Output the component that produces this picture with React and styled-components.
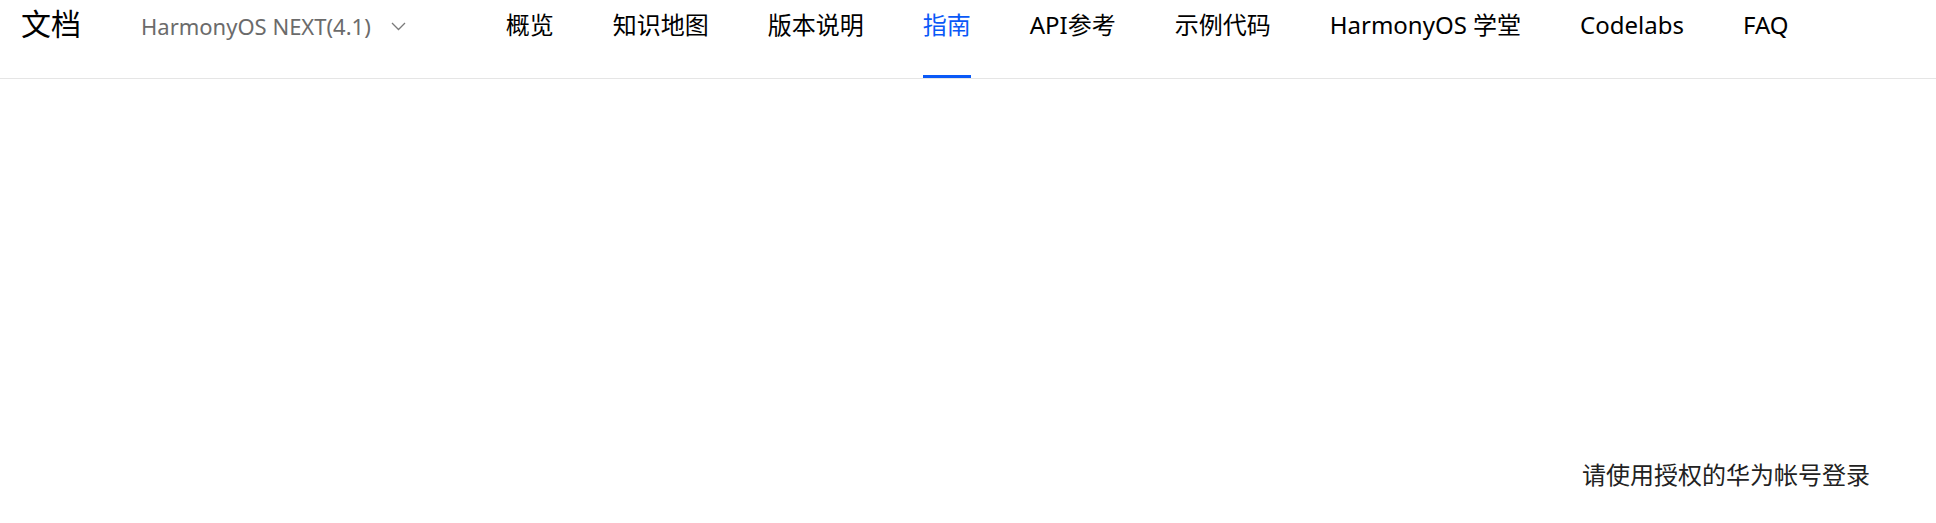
import React from "react";
import styled, { createGlobalStyle } from "styled-components";

const GlobalStyle = createGlobalStyle`
  html, body {
    margin: 0;
    padding: 0;
    background: #ffffff;
  }
  body {
    font-family: "Noto Sans", "Noto Sans CJK SC", sans-serif;
    color: #000000;
  }
`;

const navItems = [
  "概览",
  "知识地图",
  "版本说明",
  "指南",
  "API参考",
  "示例代码",
  "HarmonyOS 学堂",
  "Codelabs",
  "FAQ",
];

const St = {
  Page: styled.div`
    width: 100%;
    min-height: 523px;
    display: flex;
    flex-direction: column;
  `,

  Header: styled.header`
    display: flex;
    align-items: flex-start;
    height: 78px;
    border-bottom: 1px solid #e5e5e5;
    padding-left: 21px;
  `,

  Logo: styled.div`
    font-size: 30px;
    line-height: 40px;
    padding-top: 4px;
    color: #000000;
  `,

  Version: styled.div`
    display: flex;
    align-items: center;
    margin-left: 60px;
    padding-top: 6px;
    height: 40px;
    font-size: 22px;
    color: #6b6b6b;
    cursor: pointer;
  `,

  Chevron: styled.svg`
    margin-left: 20px;
    width: 15px;
    height: 9px;
  `,

  Nav: styled.nav`
    display: flex;
    gap: 59px;
    margin-left: 100px;
    height: 100%;
  `,

  NavItem: styled.a`
    box-sizing: border-box;
    height: 100%;
    padding-top: 7px;
    font-size: 24px;
    line-height: 36px;
    white-space: nowrap;
    color: ${({ $active }) => ($active ? "#0a59f7" : "#000000")};
    border-bottom: 3px solid
      ${({ $active }) => ($active ? "#0a59f7" : "transparent")};
    cursor: pointer;
  `,

  Main: styled.main`
    flex: 1;
    display: flex;
    justify-content: flex-end;
    padding: 380px 66px 0 0;
  `,

  Notice: styled.p`
    margin: 0;
    font-size: 24px;
    line-height: 32px;
    color: #222222;
  `,
};

const App = () => {
  return (
    <>
      <GlobalStyle />
      <St.Page>
        <St.Header>
          <St.Logo>文档</St.Logo>
          <St.Version>
            HarmonyOS NEXT(4.1)
            <St.Chevron viewBox="0 0 15 9" fill="none">
              <path
                d="M1 1L7.5 7.5L14 1"
                stroke="#7a7a7a"
                strokeWidth="1.3"
              />
            </St.Chevron>
          </St.Version>
          <St.Nav>
            {navItems.map((item) => (
              <St.NavItem key={item} $active={item === "指南"}>
                {item}
              </St.NavItem>
            ))}
          </St.Nav>
        </St.Header>
        <St.Main>
          <St.Notice>请使用授权的华为帐号登录</St.Notice>
        </St.Main>
      </St.Page>
    </>
  );
};

export default App;
